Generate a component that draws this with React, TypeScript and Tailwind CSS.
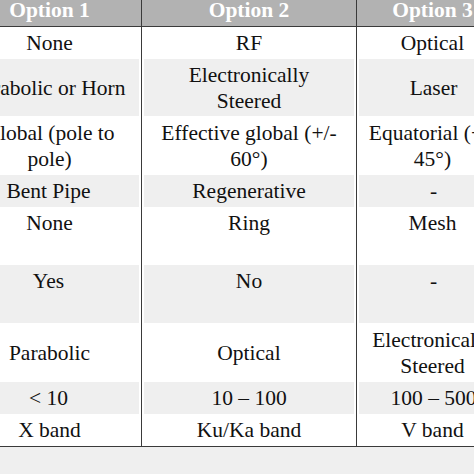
type Row = {
  h: string;
  gray: boolean;
  top?: boolean;
  cells: string[][];
};

const rows: Row[] = [
  { h: 'h-[32.5px]', gray: false, cells: [['None'], ['RF'], ['Optical']] },
  { h: 'h-[57px]', gray: true, cells: [['Parabolic or Horn'], ['Electronically', 'Steered'], ['Laser']] },
  { h: 'h-[59px]', gray: false, cells: [['Global (pole to', 'pole)'], ['Effective global (+/-', '60°)'], ['Equatorial (+/-', '45°)']] },
  { h: 'h-[32px]', gray: true, cells: [['Bent Pipe'], ['Regenerative'], ['-']] },
  { h: 'h-[58px]', gray: false, top: true, cells: [['None'], ['Ring'], ['Mesh']] },
  { h: 'h-[58px]', gray: true, top: true, cells: [['Yes'], ['No'], ['-']] },
  { h: 'h-[59px]', gray: false, cells: [['Parabolic'], ['Optical'], ['Electronically', 'Steered']] },
  { h: 'h-[32px]', gray: true, cells: [['< 10'], ['10 – 100'], ['100 – 500']] },
  { h: 'h-[32px]', gray: false, cells: [['X band'], ['Ku/Ka band'], ['V band']] },
];

const headers = ['Option 1', 'Option 2', 'Option 3'];

// inner inset of the shaded band next to each divider
const inset = ['mr-[2px]', 'mx-[2px]', 'ml-[2px]'];

export default function App() {
  return (
    <div
      className="w-[474px] h-[474px] overflow-hidden bg-white text-[#111] text-[21.5px] leading-[26px]"
      style={{ fontFamily: '"Liberation Serif", "Times New Roman", serif' }}
    >
      <div className="ml-[-42px] w-[550px] h-full flex flex-col">
        {/* header */}
        <div className="grid grid-cols-[183px_215px_152px] h-[26.5px] bg-[#b2b2b2] border-b-[1.5px] border-[#3a3a3a] overflow-hidden">
          {headers.map((t, i) => (
            <div
              key={t}
              className={`text-center font-bold text-white leading-[20px] ${i > 0 ? 'border-l-[1.5px] border-[#3a3a3a]' : ''}`}
            >
              {t}
            </div>
          ))}
        </div>

        {rows.map((r, ri) => (
          <div key={ri} className={`grid grid-cols-[183px_215px_152px] ${r.h}`}>
            {r.cells.map((lines, ci) => (
              <div key={ci} className={`flex ${ci > 0 ? 'border-l-[1.5px] border-[#3a3a3a]' : ''}`}>
                <div
                  className={`flex-1 flex flex-col text-center ${r.top ? 'justify-start pt-[3px]' : 'justify-center'} ${r.gray ? `bg-[#efefef] ${inset[ci]}` : ''}`}
                >
                  {lines.map((l) => (
                    <span key={l} className="block whitespace-nowrap">
                      {l}
                    </span>
                  ))}
                </div>
              </div>
            ))}
          </div>
        ))}

        <div className="flex-1 border-t-[1.5px] border-[#3a3a3a] bg-[#efefef]" />
      </div>
    </div>
  );
}
